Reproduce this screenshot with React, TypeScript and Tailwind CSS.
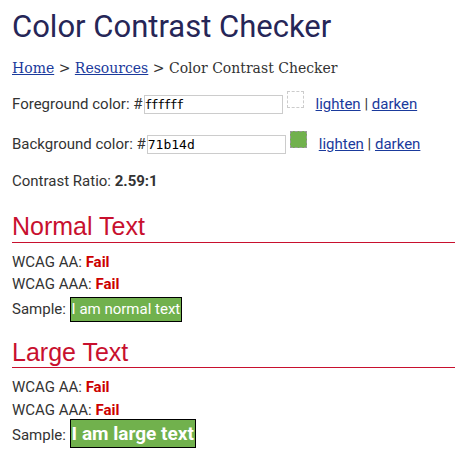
import React from "react";

const body = { fontFamily: "Roboto, 'Open Sans', sans-serif" };
const head = { fontFamily: "'Liberation Sans', Arial, sans-serif" };

function Links() {
  return (
    <div className="ml-[12px]">
      <a href="#" className="underline text-[#1a3a9c]">lighten</a> | <a href="#" className="underline text-[#1a3a9c]">darken</a>
    </div>
  );
}

export default function App() {
  return (
    <div className="bg-white w-[455px] h-[458px] overflow-hidden pl-[12px] text-[#333]" style={body}>
      <h1 className="text-[31px] leading-[36px] pt-[9px] text-[#262657]" style={{ fontFamily: "Roboto, sans-serif", fontWeight: 400 }}>
        Color Contrast Checker
      </h1>
      <div className="mt-[13px] text-[14px] leading-[20px] text-[#333]" style={{ fontFamily: "'DejaVu Serif', serif" }}>
        <a href="#" className="underline text-[#1a3a9c]">Home</a> &gt; <a href="#" className="underline text-[#1a3a9c]">Resources</a> &gt; Color Contrast Checker
      </div>

      <div className="mt-[14px] flex items-center h-[24px] text-[15px]">
        <span>Foreground color: #</span>
        <input
          readOnly
          value="ffffff"
          className="ml-[1px] w-[139px] h-[19px] border border-[#ccc] text-[13px] px-0 leading-[17px] text-black"
          style={{ fontFamily: "'DejaVu Sans Mono', monospace", letterSpacing: "-1.5px" }}
        />
        <div className="ml-[4px] -mt-[10px] w-[17px] h-[17px] border border-dashed border-[#ccc] bg-white" />
        <Links />
      </div>

      <div className="mt-[16px] flex items-center h-[24px] text-[15px]">
        <span>Background color: #</span>
        <input
          readOnly
          value="71b14d"
          className="ml-[1px] w-[139px] h-[19px] border border-[#ccc] text-[13px] px-0 leading-[17px] text-black"
          style={{ fontFamily: "'DejaVu Sans Mono', monospace" }}
        />
        <div className="ml-[4px] -mt-[10px] w-[17px] h-[17px] border border-dashed border-[#999] bg-[#71b14d]" />
        <Links />
      </div>

      <div className="mt-[14px] text-[15px] leading-[22px]">
        Contrast Ratio: <b>2.59:1</b>
      </div>

      <h2 className="mt-[19px] text-[25px] leading-[30px] text-[#c8102e] pb-[1px]" style={head}>
        Normal Text
      </h2>
      <div className="h-[1px] bg-[#c8102e]" />
      <div className="mt-[8px] text-[15px] leading-[22px]">
        <div>WCAG AA: <b className="text-[#cc0000]">Fail</b></div>
        <div>WCAG AAA: <b className="text-[#cc0000]">Fail</b></div>
        <div className="mt-[2px]">
          Sample: <span className="inline-block border border-black bg-[#71b14d] text-white px-[1px] leading-[23px]">I am normal text</span>
        </div>
      </div>

      <h2 className="mt-[15px] text-[25px] leading-[30px] text-[#c8102e]" style={head}>
        Large Text
      </h2>
      <div className="h-[1px] bg-[#c8102e]" />
      <div className="mt-[8px] text-[15px] leading-[23px]">
        <div>WCAG AA: <b className="text-[#cc0000]">Fail</b></div>
        <div>WCAG AAA: <b className="text-[#cc0000]">Fail</b></div>
        <div className="-mt-[3px]">
          Sample: <span className="inline-block border border-black bg-[#71b14d] text-white px-[1px] text-[19px] font-bold leading-[27px]">I am large text</span>
        </div>
      </div>
    </div>
  );
}
